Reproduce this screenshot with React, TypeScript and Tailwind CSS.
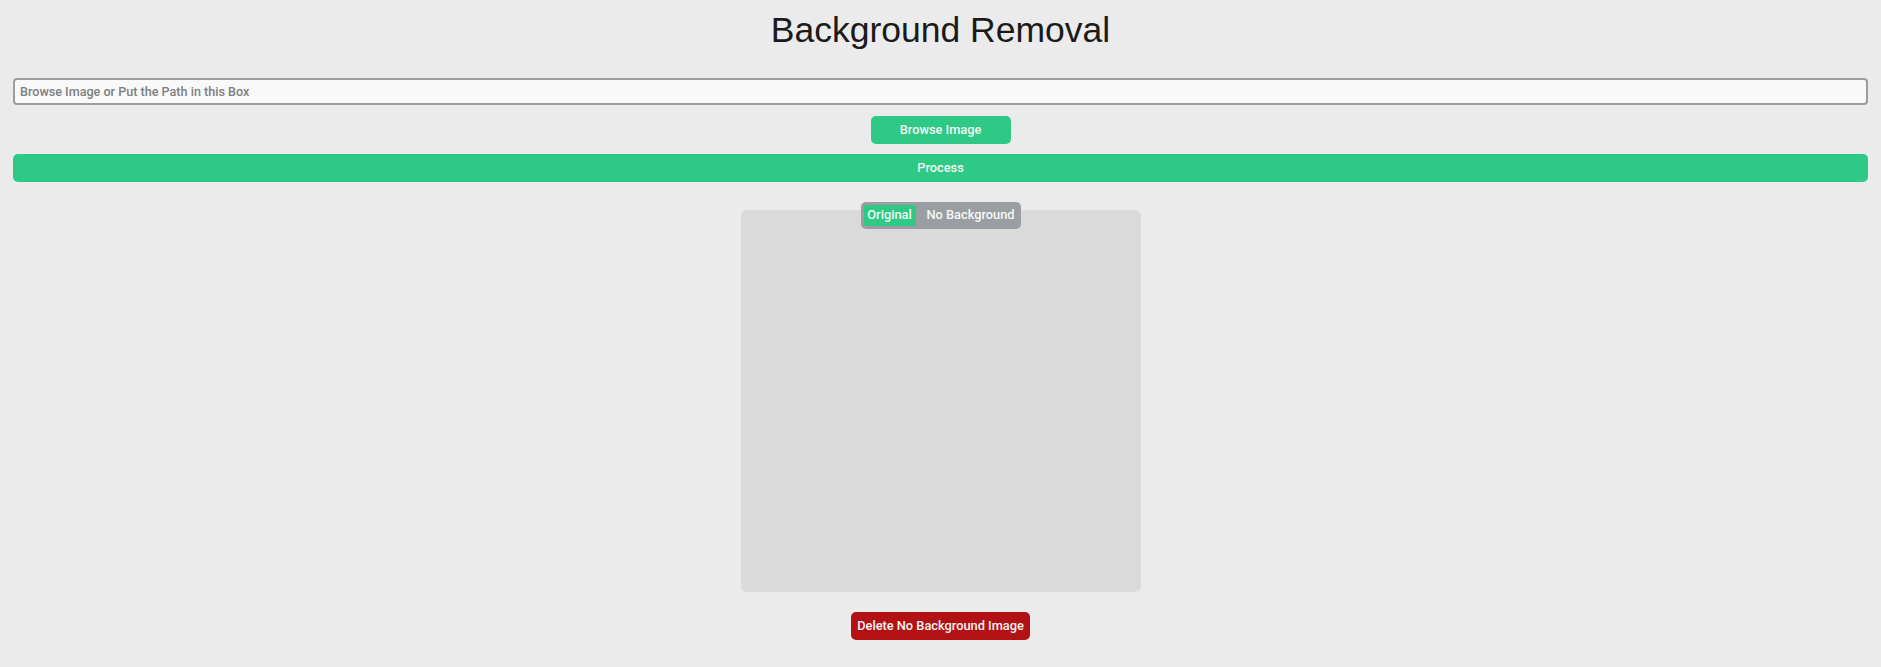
export default function App() {
  return (
    <div className="min-h-screen bg-[#ebebeb] px-[13px] font-['Roboto',sans-serif]">
      {/* Title */}
      <h1 className="pt-[13px] text-center font-['Liberation_Sans',Arial,sans-serif] text-[35.5px] font-normal leading-none text-[#1a1a1a]">
        Background Removal
      </h1>

      {/* Path input */}
      <input
        type="text"
        placeholder="Browse Image or Put the Path in this Box"
        className="mt-[29px] block h-[27px] w-full rounded-[4px] border-2 border-[#9a9ea3] bg-[#f9f9f9] px-[5px] text-[12.6px] font-medium text-[#333] outline-none placeholder:text-[#808080]"
      />

      <div className="mt-[11px] flex justify-center">
        <button
          type="button"
          className="h-[28px] w-[140px] rounded-[5px] bg-[#2dc985] text-[12.8px] font-medium text-[#f4f8f4]"
        >
          Browse Image
        </button>
      </div>

      <button
        type="button"
        className="mt-[10px] block h-[28px] w-full rounded-[5px] bg-[#2dc985] text-[12.8px] font-medium text-[#f4f8f4]"
      >
        Process
      </button>

      {/* Preview */}
      <div className="mt-[20px] flex justify-center">
        <div className="relative pt-[8px]">
          <div className="h-[382px] w-[400px] rounded-[6px] bg-[#dadada]" />
          {/* Toggle */}
          <div className="absolute left-1/2 top-0 flex h-[27px] w-[160px] -translate-x-1/2 items-center rounded-[5px] bg-[#9a9ea3] p-[3px]">
            <button
              type="button"
              className="flex h-[21px] w-[52px] items-center justify-center rounded-[2px] bg-[#2dc985] text-[12.8px] font-medium text-[#f4f8f4]"
            >
              Original
            </button>
            <button
              type="button"
              className="flex h-[21px] flex-1 items-center pl-[11px] text-[12.8px] font-medium text-[#f4f8f4]"
            >
              No Background
            </button>
          </div>
        </div>
      </div>

      <div className="mt-[20px] flex justify-center">
        <button
          type="button"
          className="h-[28px] w-[179px] rounded-[5px] bg-[#b31214] text-[12.8px] font-medium text-[#f4f4f4]"
        >
          Delete No Background Image
        </button>
      </div>
    </div>
  );
}
